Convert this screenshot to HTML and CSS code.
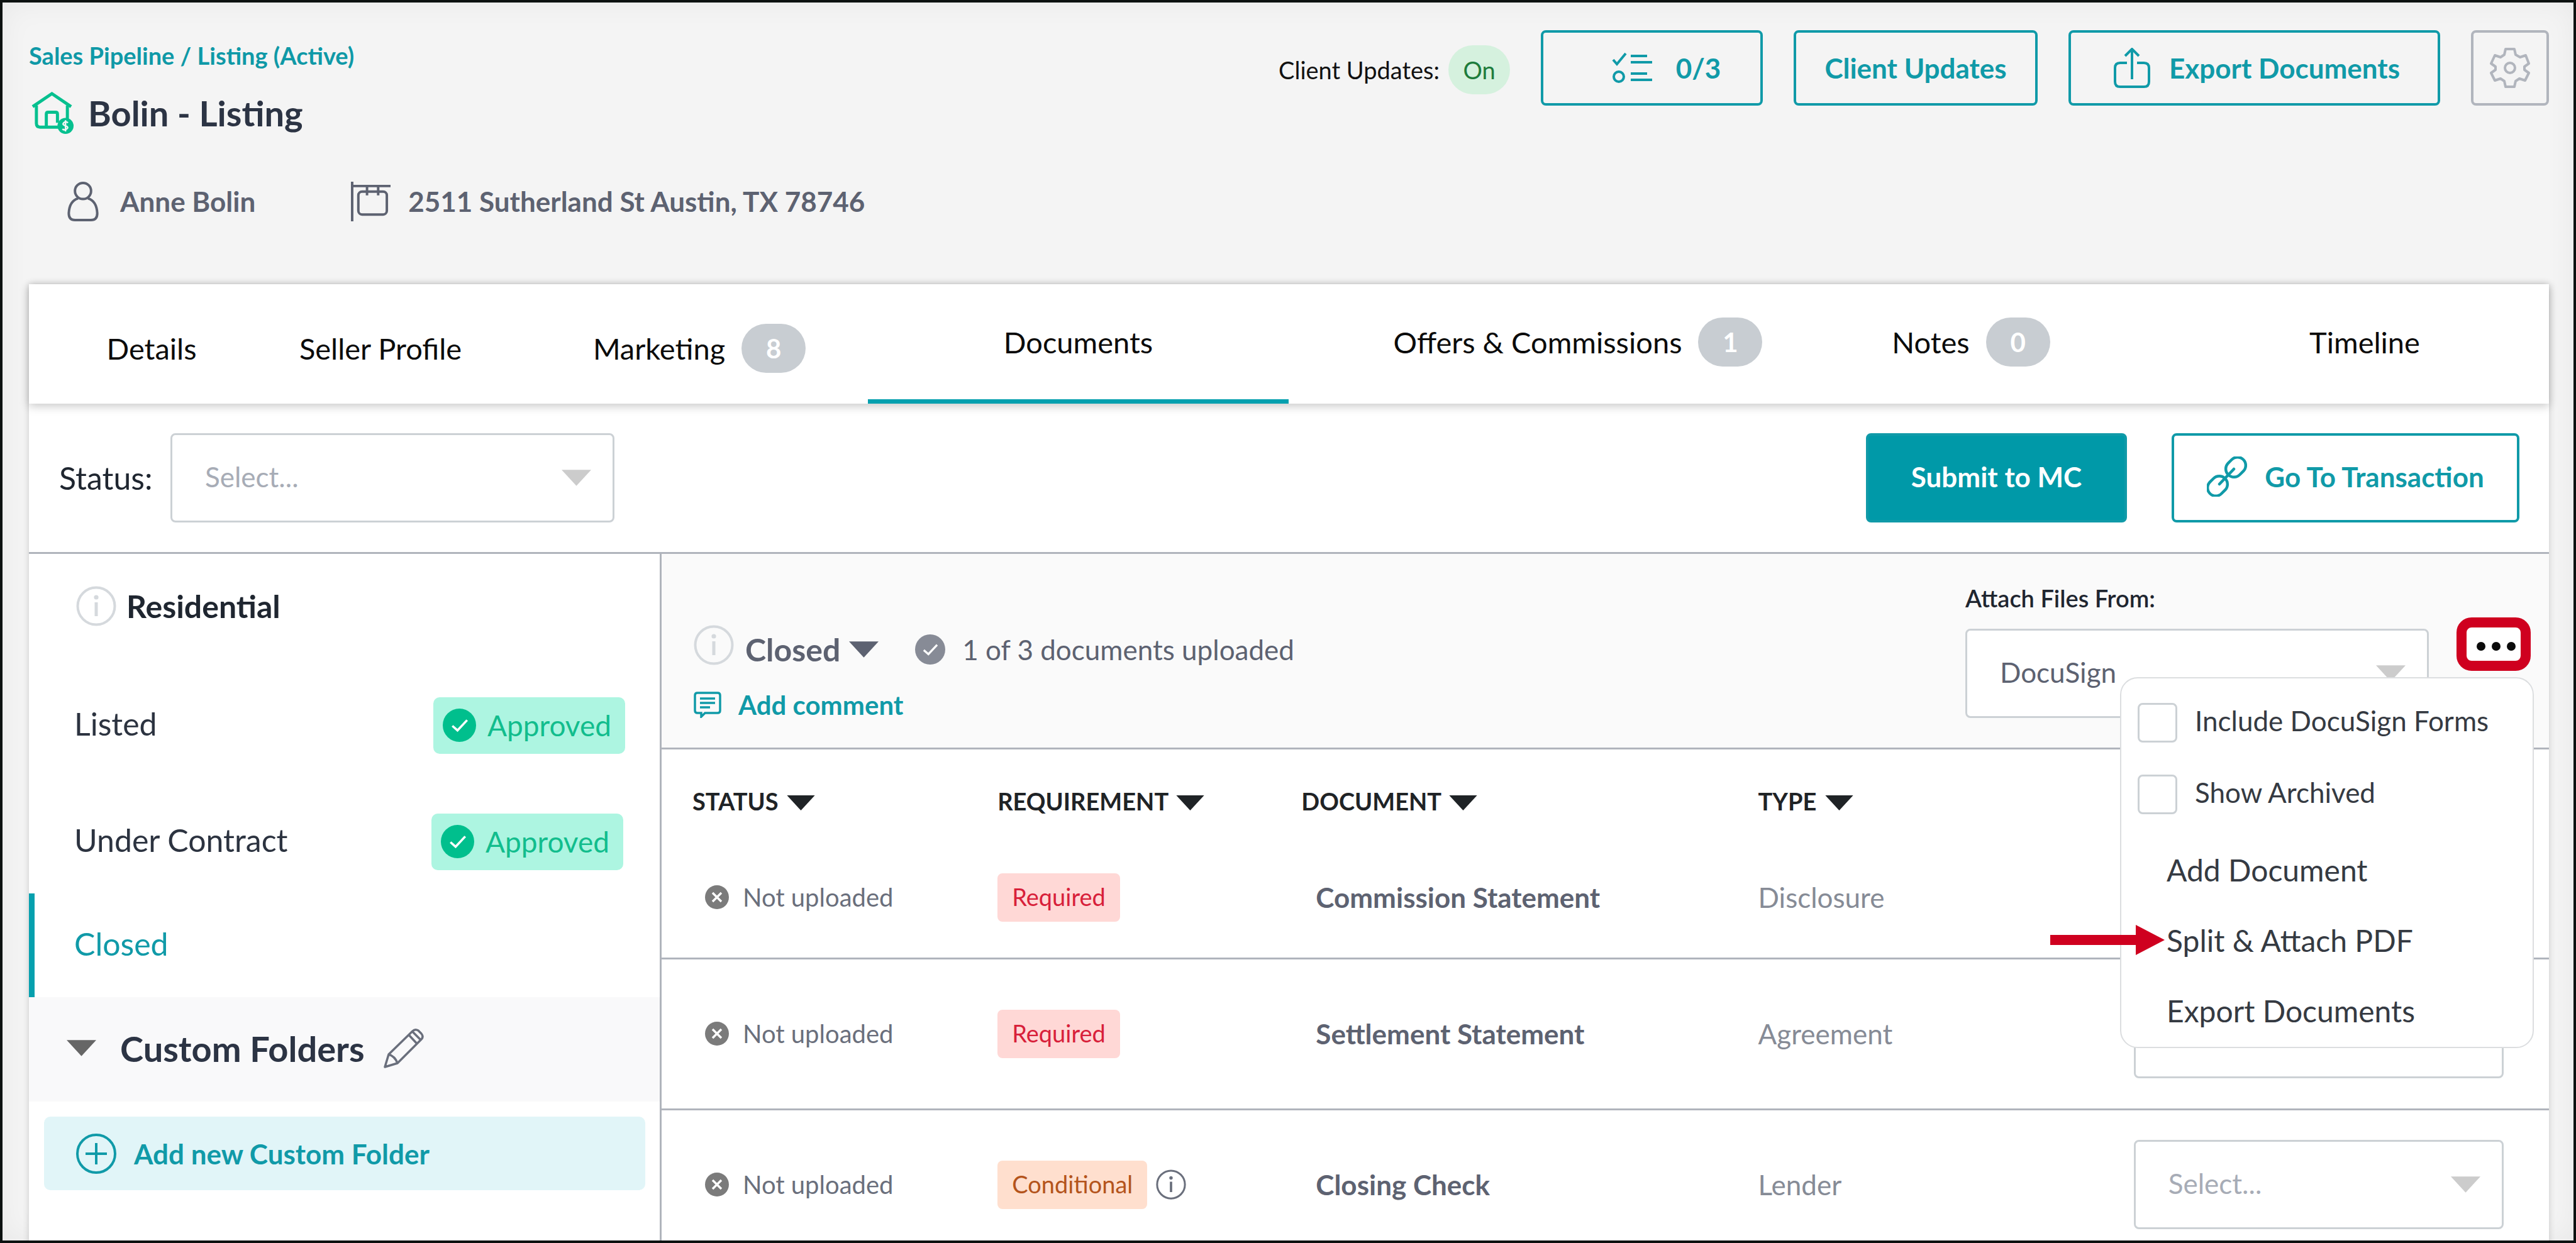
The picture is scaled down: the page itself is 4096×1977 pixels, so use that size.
FILE: index.html
```html
<!DOCTYPE html>
<html lang="en">
<head>
<meta charset="utf-8">
<title>Bolin - Listing</title>
<link rel="stylesheet" href="styles.css">
</head>
<body>
<svg class="defs" aria-hidden="true">
  <symbol id="caret" viewBox="0 0 48 26"><path d="M0 0H48L24 26Z" fill="currentColor"/></symbol>
  <symbol id="info" viewBox="0 0 64 64"><circle cx="32" cy="32" r="29.5" fill="none" stroke="currentColor" stroke-width="4"/><circle cx="32" cy="18" r="3.6" fill="currentColor"/><path d="M32 26V48" stroke="currentColor" stroke-width="5"/></symbol>
  <symbol id="check" viewBox="0 0 52 52"><circle cx="26" cy="26" r="26" fill="currentColor"/><path d="M15 27L23 34L38 18" fill="none" stroke="#fff" stroke-width="3.5"/></symbol>
  <symbol id="cross" viewBox="0 0 38 38"><circle cx="19" cy="19" r="19" fill="currentColor"/><path d="M12 12L26 26M26 12L12 26" stroke="#fff" stroke-width="3.5"/></symbol>
</svg>
<div class="frame">
  <header class="header">
    <div class="header-main">
      <nav class="crumbs"><a href="#">Sales Pipeline</a> / <a href="#">Listing (Active)</a></nav>
      <h1 class="title">
        <svg class="icon-house" viewBox="0 0 68 68" fill="none" stroke="currentColor" stroke-width="5"><path d="M2 24L33 3L64 24"/><path d="M8 22V51Q8 57 14 57H44M58 22V44"/><path d="M24 57V36Q24 33 27 33H39Q42 33 42 36V50"/><circle cx="55" cy="55" r="13" fill="currentColor" stroke="none"/><path d="M59 50Q55 47 52 50T55 55T57 60T50 60M55 46V64" stroke="#f4f4f4" stroke-width="2.5"/></svg>
        Bolin - Listing
      </h1>
      <div class="contacts">
        <span class="contact"><svg class="icon-person" viewBox="0 0 50 64" fill="none" stroke="currentColor" stroke-width="4"><circle cx="25" cy="15" r="13"/><path d="M17 27Q3 31 2 51Q2 62 12 62H38Q48 62 48 51Q47 31 33 27"/></svg>Anne Bolin</span>
        <span class="contact"><svg class="icon-sign" viewBox="0 0 64 64" fill="none" stroke="currentColor" stroke-width="4"><path d="M2 0V64M2 7H64"/><rect x="12" y="16" width="46" height="37" rx="6"/><path d="M26 7V22M44 7V22"/></svg>2511 Sutherland St Austin, TX 78746</span>
      </div>
    </div>
    <div class="actions">
      <span class="updates">Client Updates: <span class="pill">On</span></span>
      <button class="btn btn-tasks"><svg class="icon-tasks" viewBox="0 0 66 50" fill="none" stroke="currentColor" stroke-width="4"><path d="M2 12L8 19L22 2M30 6H56M30 16H64M30 34H56M30 44H64"/><circle cx="11" cy="39" r="8"/></svg>0/3</button>
      <button class="btn btn-updates">Client Updates</button>
      <button class="btn btn-export"><svg class="icon-export" viewBox="0 0 58 64" fill="none" stroke="currentColor" stroke-width="4"><path d="M21 24H10Q2 24 2 32V54Q2 62 10 62H48Q56 62 56 54V32Q56 24 48 24H37M29 50V2M18 13L29 2L40 13"/></svg>Export Documents</button>
      <button class="btn btn-gear" aria-label="Settings"><svg class="icon-gear" viewBox="0 0 64 64" fill="none" stroke="currentColor" stroke-width="4" stroke-linejoin="round"><path d="M25 2H39L41 11L48 15L57 12L62 25L55 30V35L62 40L56 52L47 49L41 53L39 62H25L23 53L17 49L8 52L2 40L9 35V30L2 25L8 12L17 15L23 11Z"/><circle cx="32" cy="32" r="8"/></svg></button>
    </div>
  </header>

  <main class="card">
    <nav class="tabs">
      <a class="tab tab-low" href="#">Details</a>
      <a class="tab tab-low" href="#">Seller Profile</a>
      <a class="tab tab-low tab-marketing" href="#">Marketing <span class="count">8</span></a>
      <a class="tab tab-active" href="#">Documents</a>
      <a class="tab" href="#">Offers &amp; Commissions <span class="count">1</span></a>
      <a class="tab" href="#">Notes <span class="count">0</span></a>
      <a class="tab tab-timeline" href="#">Timeline</a>
    </nav>

    <section class="toolbar">
      <label class="status-label" for="status">Status:</label>
      <div class="select select-status"><select id="status"><option>Select...</option></select><svg class="caret"><use href="#caret"/></svg></div>
      <button class="btn btn-submit">Submit to MC</button>
      <a class="btn btn-go" href="#"><svg class="icon-link" viewBox="0 0 64 64" fill="none" stroke="currentColor" stroke-width="4.5" stroke-linecap="round"><rect x="-17" y="-13" width="34" height="26" rx="13" transform="translate(46 17) rotate(-45)"/><rect x="-17" y="-13" width="34" height="26" rx="13" transform="translate(17 47) rotate(-45)"/><path d="M20 44L43 20"/></svg>Go To Transaction</a>
    </section>

    <div class="panes">
      <aside class="sidebar">
        <h2 class="group"><svg class="icon-info pale"><use href="#info"/></svg>Residential</h2>
        <a class="stage stage-first" href="#">Listed <span class="approved"><svg class="icon-check"><use href="#check"/></svg>Approved</span></a>
        <a class="stage" href="#">Under Contract <span class="approved"><svg class="icon-check"><use href="#check"/></svg>Approved</span></a>
        <a class="stage stage-active" href="#">Closed</a>
        <h2 class="folders"><svg class="caret"><use href="#caret"/></svg>Custom Folders<svg class="icon-pencil" viewBox="0 0 64 64" fill="none" stroke="currentColor" stroke-width="3.5" stroke-linejoin="round"><path d="M2 62L8 42L46 5Q50 1 55 4L60 9Q64 14 60 18L22 56ZM40 11L53 25M46 6L59 19M8 42Q18 45 22 56"/></svg></h2>
        <button class="add-folder"><svg class="icon-plus" viewBox="0 0 64 64" fill="none" stroke="currentColor" stroke-width="4"><circle cx="32" cy="32" r="30"/><path d="M32 15V49M15 32H49"/></svg>Add new Custom Folder</button>
      </aside>

      <section class="content">
        <div class="content-head">
          <div class="summary">
            <div class="summary-row"><svg class="icon-info pale"><use href="#info"/></svg><strong class="stage-name">Closed</strong><svg class="caret"><use href="#caret"/></svg><svg class="icon-done"><use href="#check"/></svg>1 of 3 documents uploaded</div>
            <a class="comment" href="#"><svg class="icon-comment" viewBox="0 0 44 42" fill="none" stroke="currentColor" stroke-width="3.5"><path d="M6 2H38Q42 2 42 6V30Q42 34 38 34H18L12 40V34H6Q2 34 2 30V6Q2 2 6 2ZM10 11H34M10 18H34M10 25H26"/></svg>Add comment</a>
          </div>
          <div class="attach">
            <label class="attach-label" for="source">Attach Files From:</label>
            <div class="select select-source"><select id="source"><option>DocuSign</option></select><svg class="caret"><use href="#caret"/></svg></div>
          </div>
          <button class="more" aria-label="More"><i class="dot"></i><i class="dot"></i><i class="dot"></i></button>
          <div class="menu">
            <label class="menu-check"><input type="checkbox">Include DocuSign Forms</label>
            <label class="menu-check"><input type="checkbox">Show Archived</label>
            <div class="menu-links">
              <a class="menu-link" href="#">Add Document</a>
              <a class="menu-link" href="#"><svg class="pointer" viewBox="0 0 182 48"><path d="M0 16H136V0L182 24L136 48V32H0Z" fill="currentColor"/></svg>Split &amp; Attach PDF</a>
              <a class="menu-link" href="#">Export Documents</a>
            </div>
          </div>
        </div>
        <table class="docs">
          <colgroup><col class="c-status"><col class="c-req"><col class="c-doc"><col class="c-type"><col class="c-select"></colgroup>
          <thead><tr>
            <th>STATUS <svg class="caret"><use href="#caret"/></svg></th>
            <th>REQUIREMENT <svg class="caret"><use href="#caret"/></svg></th>
            <th>DOCUMENT <svg class="caret"><use href="#caret"/></svg></th>
            <th>TYPE <svg class="caret"><use href="#caret"/></svg></th>
            <th></th>
          </tr></thead>
          <tbody>
            <tr class="row-first">
              <td><span class="state"><svg class="icon-cross"><use href="#cross"/></svg>Not uploaded</span></td>
              <td><span class="tag tag-required">Required</span></td>
              <td class="doc">Commission Statement</td>
              <td class="type">Disclosure</td>
              <td class="cell-select"><div class="select"><select aria-label="Action"><option>Select...</option></select><svg class="caret"><use href="#caret"/></svg></div></td>
            </tr>
            <tr>
              <td><span class="state"><svg class="icon-cross"><use href="#cross"/></svg>Not uploaded</span></td>
              <td><span class="tag tag-required">Required</span></td>
              <td class="doc">Settlement Statement</td>
              <td class="type">Agreement</td>
              <td class="cell-select"><div class="select"><select aria-label="Action"><option>Select...</option></select><svg class="caret"><use href="#caret"/></svg></div></td>
            </tr>
            <tr>
              <td><span class="state"><svg class="icon-cross"><use href="#cross"/></svg>Not uploaded</span></td>
              <td><span class="req"><span class="tag tag-conditional">Conditional</span><svg class="icon-hint"><use href="#info"/></svg></span></td>
              <td class="doc">Closing Check</td>
              <td class="type">Lender</td>
              <td class="cell-select"><div class="select"><select aria-label="Action"><option>Select...</option></select><svg class="caret"><use href="#caret"/></svg></div></td>
            </tr>
          </tbody>
        </table>
      </section>
    </div>
  </main>
</div>
</body>
</html>
```
FILE: styles.css
```css
* { box-sizing: border-box; }
body { margin: 0; font-family: Lato, "Open Sans", sans-serif; font-size: 44px; color: #1f2630; }
a { color: inherit; text-decoration: none; }
button, select { font: inherit; color: inherit; }
h1, h2 { margin: 0; }
svg { flex: none; }
.defs { position: absolute; width: 0; height: 0; }

.frame {
  height: 100vh; overflow: hidden;
  border: 4px solid #0c1110;
  background: #f4f4f4;
  box-shadow: inset 0 0 48px rgba(0, 0, 0, 0.05);
}

/* Page header */
.header { display: flex; justify-content: space-between; padding: 44px 39px 100px 42px; }
.header-main { padding-top: 14px; }
.crumbs { font-size: 38px; line-height: 52px; font-weight: 700; color: #0f99a7; }
.title { display: flex; align-items: center; gap: 23px; margin-top: 32px; padding-left: 4px; font-size: 56px; line-height: 67px; font-weight: 700; color: #2c3444; }
.icon-house { width: 67px; height: 67px; color: #06c08f; }
.contacts { display: flex; gap: 152px; margin-top: 76px; padding-left: 61px; line-height: 63px; font-weight: 700; color: #5d6271; }
.contact { display: flex; align-items: center; gap: 34px; }
.contact + .contact { gap: 28px; }
.icon-person { width: 50px; height: 63px; }
.icon-sign { width: 63px; height: 63px; }

.actions { display: flex; align-items: flex-start; gap: 49px; }
.updates { display: flex; align-items: center; gap: 14px; height: 126px; font-size: 38px; color: #111; }
.pill { display: flex; align-items: center; justify-content: center; width: 98px; height: 78px; border-radius: 39px; background: #d5f1de; color: #1e7c3c; }
.btn { display: flex; align-items: center; justify-content: center; height: 120px; padding: 0; border: 4px solid #109aa8; border-radius: 8px; background: none; color: #109aa8; font-weight: 700; }
.btn-tasks { width: 353px; gap: 36px; padding-left: 46px; }
.btn-updates { width: 388px; }
.btn-export { width: 591px; gap: 30px; padding-left: 8px; }
.btn-gear { width: 124px; border-color: #b1b5bd; color: #b1b5bd; }
.icon-tasks { width: 66px; height: 50px; }
.icon-export { width: 58px; height: 64px; }
.icon-gear { width: 64px; height: 64px; }

/* Card and tabs */
.card { margin: 0 39px 0 42px; background: #fff; box-shadow: 0 0 10px rgba(0, 0, 0, 0.18); }
.tabs {
  display: grid; grid-template-columns: 390fr 338fr 606fr 669fr 920fr 330fr 754fr;
  position: relative; height: 190px;
  box-shadow: 0 4px 14px rgba(0, 0, 0, 0.22);
}
.tab { display: flex; align-items: center; justify-content: center; gap: 26px; font-size: 47px; color: #0b0b0b; border-bottom: 7px solid transparent; }
.tab-low { padding-top: 20px; }
.tab-marketing { padding-left: 70px; }
.tab-timeline { padding-left: 168px; }
.tab-active { border-bottom-color: #04a0af; }
.count { display: flex; align-items: center; justify-content: center; width: 102px; height: 78px; border-radius: 39px; background: #c8cdd2; color: #fff; font-size: 42px; font-weight: 700; }

.toolbar { display: flex; align-items: center; height: 239px; padding: 0 47px 0 48px; border-bottom: 3px solid #b0b4bc; }
.status-label { width: 177px; font-size: 50px; }
.select { display: grid; align-items: center; height: 142px; border: 3px solid #ccd1d5; border-radius: 8px; background: #fff; color: #a7acb6; }
.select select { grid-area: 1 / 1; width: 100%; height: 100%; padding: 0 52px 4px; border: 0; background: none; appearance: none; }
.select .caret { grid-area: 1 / 1; justify-self: end; margin-right: 34px; color: #ccc; pointer-events: none; }
.caret { width: 47px; height: 26px; }
.select-status { width: 706px; }
.btn-submit, .btn-go { height: 142px; padding-bottom: 4px; }
.btn-submit { width: 415px; margin-left: auto; background: #0099a8; color: #fff; }
.btn-go { width: 553px; margin-left: 71px; gap: 28px; }
.icon-link { width: 64px; height: 64px; }

/* Sidebar */
.panes { display: flex; align-items: stretch; }
.sidebar { width: 1006px; border-right: 3px solid #b0b4bc; }
.group { display: flex; align-items: center; gap: 16px; height: 170px; padding: 0 0 4px 75px; font-size: 50px; font-weight: 700; }
.icon-info { width: 64px; height: 64px; }
.pale { color: #d5d9dd; }
.stage { display: flex; align-items: center; justify-content: space-between; height: 165px; padding: 0 58px 6px 72px; font-size: 50px; color: #2c3340; }
.stage-first { height: 205px; padding-right: 55px; }
.stage-active { padding-left: 63px; border-left: 9px solid #06a0ae; color: #109aa8; }
.approved { display: flex; align-items: center; gap: 18px; width: 305px; height: 90px; margin-top: 6px; padding-left: 15px; border-radius: 10px; background: #adf5e1; color: #12bd8d; font-size: 46px; }
.icon-check { width: 53px; height: 53px; color: #00bf8d; }
.folders { display: flex; align-items: center; height: 166px; padding: 0 0 4px 60px; background: #f9f9fa; font-size: 56px; font-weight: 700; color: #2c3444; }
.folders .caret { margin-right: 38px; color: #666; }
.icon-pencil { width: 64px; height: 64px; margin-left: 30px; color: #6a6f7c; }
.add-folder { display: flex; align-items: center; gap: 28px; width: calc(100% - 47px); height: 117px; margin: 24px 23px 0 24px; padding: 0 0 0 51px; border: 0; border-radius: 10px; background: #e1f5f8; color: #109aa8; font-weight: 700; }
.icon-plus { width: 64px; height: 64px; }

/* Documents pane */
.content { flex: 1; }
.content-head { position: relative; display: flex; align-items: flex-start; height: 311px; padding: 46px 29px 0 51px; border-bottom: 3px solid #b0b4bc; background: #fafafa; }
.summary { flex: 1; padding-top: 68px; color: #5d6271; }
.summary-row { display: flex; align-items: center; height: 76px; }
.summary-row .icon-info { margin-bottom: 14px; }
.stage-name { margin: 0 14px 0 18px; font-size: 50px; font-weight: 700; }
.icon-done { width: 48px; height: 48px; margin: 0 27px 0 58px; color: #878b96; }
.comment { display: flex; align-items: center; gap: 27px; margin-top: 24px; line-height: 52px; font-size: 42px; font-weight: 700; color: #109aa8; }
.icon-comment { width: 44px; height: 42px; }
.attach { width: 737px; }
.attach-label { display: block; margin-bottom: 25px; font-size: 38px; line-height: 48px; font-weight: 600; }
.select-source { color: #5d6271; }
.more { display: flex; align-items: center; justify-content: center; gap: 10px; width: 118px; height: 85px; margin: 55px 0 0 44px; padding: 7px 0 0 8px; border: 16px solid #cf001f; border-radius: 24px; background: #fff; }
.dot { width: 14px; height: 14px; border-radius: 50%; background: #0b0b0b; }
.menu { position: absolute; z-index: 2; top: 196px; right: 24px; width: 658px; padding: 10px 0 0; border: 2px solid #dcdee0; border-radius: 28px; background: #fff; color: #353a42; }
.menu-check { display: flex; align-items: center; gap: 28px; height: 114px; padding-left: 26px; font-size: 44px; }
.menu-check input { appearance: none; width: 63px; height: 63px; margin: 7px 0 0; border: 3px solid #ccd1d5; border-radius: 8px; background: #fff; }
.menu-links { padding: 10px 0 2px; }
.menu-link { position: relative; display: flex; align-items: center; height: 112px; padding-left: 72px; font-size: 48px; }
.pointer { position: absolute; left: -113px; width: 182px; height: 48px; color: #cf001f; }

.docs { width: 100%; table-layout: fixed; border-collapse: collapse; }
.c-status { width: 17.8%; }
.c-req { width: 16.1%; }
.c-doc { width: 24.2%; }
.c-type { width: 19.9%; }
.docs th, .docs td { padding: 0; text-align: left; vertical-align: middle; }
.docs th { height: 164px; font-size: 38px; font-weight: 700; color: #1f2326; }
.docs th:first-child { padding-left: 49px; }
.docs th .caret { width: 45px; height: 24px; margin-left: 4px; }
.docs td { height: 240px; border-bottom: 3px solid #b0b4bc; }
.docs td:first-child { padding-left: 69px; }
.docs .row-first td { height: 168px; padding-bottom: 24px; }
.docs .cell-select { padding-right: 72px; }
.state, .req { display: flex; align-items: center; gap: 22px; font-size: 40px; color: #6a6f7c; }
.req { gap: 14px; }
.icon-cross { width: 38px; height: 38px; color: #7b7b7b; }
.tag { display: inline-flex; align-items: center; height: 77px; padding: 0 23px 2px; border-radius: 8px; font-size: 38px; }
.tag-required { background: #ffd8d6; color: #d8203a; }
.tag-conditional { background: #ffdfce; color: #b4541c; }
.icon-hint { width: 48px; height: 48px; color: #6a6f7c; }
.docs .doc { padding-left: 23px; font-weight: 700; color: #5d6271; }
.type { color: #868b96; }
```
